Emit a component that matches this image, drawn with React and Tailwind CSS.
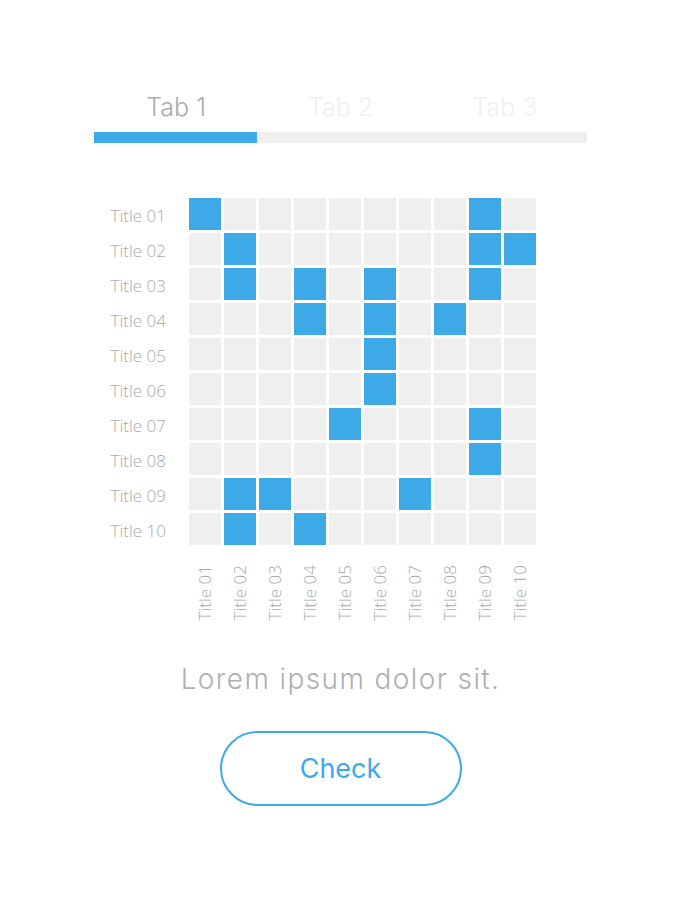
import React from 'react';

const BLUE = 'bg-[#3da9e6]';

const filled = {
  0: [0, 8],
  1: [1, 8, 9],
  2: [1, 3, 5, 8],
  3: [3, 5, 7],
  4: [5],
  5: [5],
  6: [4, 8],
  7: [8],
  8: [1, 2, 6],
  9: [1, 3],
};

const titles = Array.from({ length: 10 }, (_, i) => `Title ${String(i + 1).padStart(2, '0')}`);

const App = () => {
  return (
    <div className="w-[681px] min-h-[900px] bg-white flex flex-col items-center pt-[92px] font-['Inter',sans-serif]">
      {/* tabs */}
      <div className="w-[493px] grid grid-cols-3 text-[25px] leading-[30px] font-light text-center">
        <span className="text-[#ababab]">Tab 1</span>
        <span className="text-[#f0f0f0]">Tab 2</span>
        <span className="text-[#f0f0f0]">Tab 3</span>
      </div>
      <div className="w-[493px] h-[11px] mt-[10px] bg-[#efefef] flex">
        <div className={`w-[163px] h-full ${BLUE}`} />
      </div>

      {/* matrix */}
      <div className="w-full mt-[55px] pl-[86px] flex gap-[23px] font-['Open_Sans',sans-serif] font-light text-[17px] text-[#a9a9a9]">
        <div className="w-[80px] flex flex-col gap-[3px]">
          {titles.map((t) => (
            <div key={t} className="h-[32px] leading-[32px] pt-[2px] text-right">{t}</div>
          ))}
        </div>
        <div className="flex flex-col">
          <div className="grid grid-cols-[repeat(10,32px)] gap-[3px]">
            {titles.map((_, r) =>
              titles.map((_, c) => (
                <div
                  key={`${r}-${c}`}
                  className={`h-[32px] ${filled[r].includes(c) ? BLUE : 'bg-[#efefef]'}`}
                />
              ))
            )}
          </div>
          <div className="mt-[20px] grid grid-cols-[repeat(10,32px)] gap-[3px] items-end">
            {titles.map((t) => (
              <div key={t} className="flex justify-center">
                <span className="[writing-mode:vertical-rl] rotate-180 leading-[20px] whitespace-nowrap">{t}</span>
              </div>
            ))}
          </div>
        </div>
      </div>

      <p className="mt-[42px] text-[28px] leading-[34px] font-light text-[#b0b0b0] tracking-[1.4px]">
        Lorem ipsum dolor sit.
      </p>

      <button className="mt-[35px] w-[242px] h-[75px] rounded-full border-2 border-[#3da9e6] text-[#3da9e6] text-[27px] font-normal">
        Check
      </button>
    </div>
  );
};

export default App;
